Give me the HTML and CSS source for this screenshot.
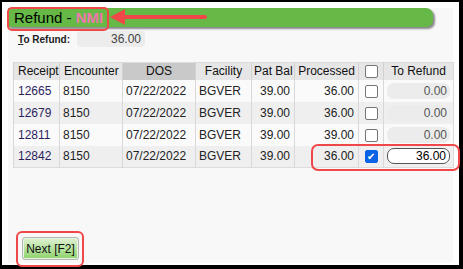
FILE: index.html
```html
<!DOCTYPE html>
<html lang="en">
<head>
  <meta charset="UTF-8">
  <title>Refund - NMI</title>
  <link rel="stylesheet" href="styles.css">
</head>
<body>
  <div class="frame">
    <div class="panel">
      <div class="title-bar">Refund - <span class="nmi">NMI</span></div>

      <div class="refund-row">
        <label class="refund-label"><u>T</u>o Refund:</label>
        <div class="refund-box">36.00</div>
      </div>

      <table class="grid">
        <colgroup>
          <col style="width:46px"><col style="width:63px"><col style="width:73px"><col style="width:56px">
          <col style="width:43px"><col style="width:64px"><col style="width:25px"><col style="width:70px">
        </colgroup>
        <thead>
          <tr>
            <th class="left">Receipt</th>
            <th class="left">Encounter</th>
            <th class="sorted">DOS</th>
            <th>Facility</th>
            <th>Pat Bal</th>
            <th>Processed</th>
            <th><span class="check"></span></th>
            <th>To Refund</th>
          </tr>
        </thead>
        <tbody>
          <tr>
            <td class="receipt">12665</td><td>8150</td><td>07/22/2022</td><td>BGVER</td>
            <td class="num">39.00</td><td class="num">36.00</td>
            <td class="mid"><span class="check"></span></td>
            <td><div class="amount">0.00</div></td>
          </tr>
          <tr>
            <td class="receipt">12679</td><td>8150</td><td>07/22/2022</td><td>BGVER</td>
            <td class="num">39.00</td><td class="num">36.00</td>
            <td class="mid"><span class="check"></span></td>
            <td><div class="amount">0.00</div></td>
          </tr>
          <tr>
            <td class="receipt">12811</td><td>8150</td><td>07/22/2022</td><td>BGVER</td>
            <td class="num">39.00</td><td class="num">39.00</td>
            <td class="mid"><span class="check"></span></td>
            <td><div class="amount">0.00</div></td>
          </tr>
          <tr>
            <td class="receipt">12842</td><td>8150</td><td>07/22/2022</td><td>BGVER</td>
            <td class="num">39.00</td><td class="num">36.00</td>
            <td class="mid"><span class="check checked">&#10004;</span></td>
            <td><div class="amount active">36.00</div></td>
          </tr>
        </tbody>
      </table>

      <div class="footer">
        <button class="next-btn">Next [F2]</button>
      </div>
    </div>

    <!-- red callouts drawn over the screenshot -->
    <div class="callout callout-title"></div>
    <svg class="callout-arrow" width="100" height="18" viewBox="0 0 100 18">
      <line x1="12" y1="9" x2="95" y2="9" stroke="#f04848" stroke-width="4" stroke-linecap="round"/>
      <polygon points="0,9 15,1 15,17" fill="#f04848"/>
    </svg>
    <div class="callout callout-row"></div>
    <div class="callout callout-next"></div>
  </div>
</body>
</html>
```

FILE: styles.css
```css
* {
  box-sizing: border-box;
}

body {
  margin: 0;
  font-family: "Liberation Sans", Arial, sans-serif;
  background-color: #fff;
}

.frame {
  position: relative;
  width: 463px;
  height: 269px;
  border-style: solid;
  border-color: #000;
  border-width: 2px 4px 4px 2px;
  padding: 6px 6px 2px 6px;
  background-color: #fff;
}

.panel {
  display: flex;
  flex-direction: column;
  height: 100%;
  background-color: #f8f8f8;
  border-radius: 0 0 4px 0;
}

.title-bar {
  width: 425px;
  height: 19px;
  padding-left: 6px;
  line-height: 19px;
  font-size: 15px;
  color: #000;
  background-color: #66b946;
  border-radius: 0 7px 7px 0;
  box-shadow: 2px 2px 2px #8a8a8a;
}

.title-bar .nmi {
  color: #ee78ac;
  font-weight: bold;
}

.refund-row {
  display: flex;
  align-items: center;
  margin-top: 4px;
  padding-left: 10px;
}

.refund-label {
  width: 59px;
  font-size: 10px;
  font-weight: bold;
  color: #222;
}

.refund-box {
  width: 68px;
  height: 16px;
  padding-right: 4px;
  line-height: 16px;
  text-align: right;
  font-size: 12px;
  color: #444;
  background-color: #ececec;
  border-radius: 4px;
}

.grid {
  margin: 15px 0 0 5px;
  width: 440px;
  table-layout: fixed;
  border-collapse: collapse;
  font-size: 12px;
  color: #222;
  border: 1px solid #dcdcdc;
}

.grid th {
  height: 17px;
  padding: 0 2px;
  font-weight: normal;
  color: #111;
  text-align: center;
  background-color: #e6e6e6;
  border-left: 1px solid #d2d2d2;
  white-space: nowrap;
}

.grid th.left {
  text-align: left;
  padding-left: 4px;
}

.grid th.sorted {
  background-color: #c9c9c9;
}

.grid td {
  height: 22px;
  padding: 0 3px;
  border-left: 1px solid #d8d8d8;
  white-space: nowrap;
  background-color: #fafafa;
}

.grid tbody tr:nth-child(even) td {
  background-color: #efefef;
}

.grid td.receipt {
  color: #2c1f5e;
  padding-left: 4px;
}

.grid td.num {
  text-align: right;
  padding-right: 4px;
}

.grid td.mid,
.grid th .check {
  text-align: center;
}

.check {
  display: inline-block;
  width: 13px;
  height: 13px;
  border: 1px solid #767676;
  border-radius: 2px;
  background-color: #fff;
  vertical-align: middle;
  font-size: 10px;
  line-height: 11px;
  text-align: center;
  color: #fff;
}

.check.checked {
  background-color: #0a63e6;
  border-color: #0a63e6;
}

.amount {
  height: 16px;
  padding-right: 3px;
  line-height: 16px;
  text-align: right;
  font-size: 12px;
  color: #555;
  background-color: #ececec;
  border-radius: 7px;
}

.amount.active {
  color: #000;
  background-color: #fff;
  border: 1px solid #555;
  line-height: 14px;
}

.footer {
  margin-top: auto;
  padding: 0 0 3px 14px;
}

.next-btn {
  width: 57px;
  height: 23px;
  padding: 0;
  font-family: "Liberation Sans", Arial, sans-serif;
  font-size: 12px;
  color: #111;
  border: 1px solid #b5b5b5;
  border-radius: 3px;
  background: linear-gradient(#dff2d2, #8ed26c);
  box-shadow: inset 0 0 0 1px #e8f5e0;
}

.callout {
  position: absolute;
  border: 2.5px solid #f04848;
  border-radius: 5px;
}

.callout-title {
  left: 5px;
  top: 5px;
  width: 102px;
  height: 24px;
}

.callout-arrow {
  position: absolute;
  left: 108px;
  top: 6px;
}

.callout-row {
  left: 309px;
  top: 142px;
  width: 149px;
  height: 27px;
  border-radius: 7px;
}

.callout-next {
  left: 14px;
  top: 229px;
  width: 68px;
  height: 36px;
  border-radius: 6px;
}
```
